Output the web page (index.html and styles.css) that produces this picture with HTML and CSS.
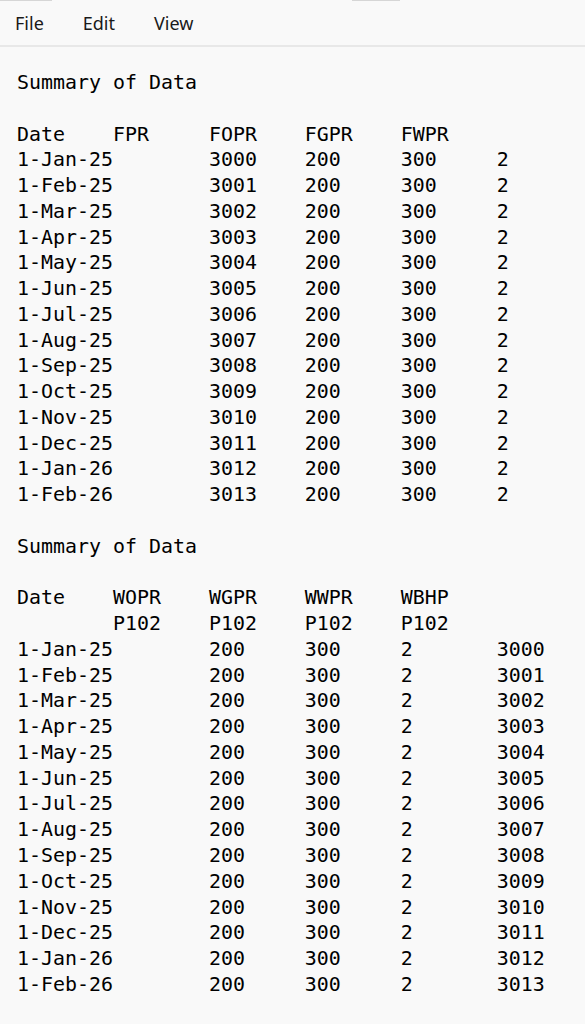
FILE: index.html
```html
<!DOCTYPE html>
<html>
<head>
<meta charset="utf-8">
<link rel="stylesheet" href="styles.css">
</head>
<body>
<div class="window">
  <div class="topline"><span class="seg seg-a"></span><span class="seg seg-b"></span></div>
  <nav class="menubar">
    <span class="menu-item">File</span>
    <span class="menu-item">Edit</span>
    <span class="menu-item">View</span>
  </nav>
  <pre class="editor">Summary of Data

Date	FPR	FOPR	FGPR	FWPR
1-Jan-25	3000	200	300	2
1-Feb-25	3001	200	300	2
1-Mar-25	3002	200	300	2
1-Apr-25	3003	200	300	2
1-May-25	3004	200	300	2
1-Jun-25	3005	200	300	2
1-Jul-25	3006	200	300	2
1-Aug-25	3007	200	300	2
1-Sep-25	3008	200	300	2
1-Oct-25	3009	200	300	2
1-Nov-25	3010	200	300	2
1-Dec-25	3011	200	300	2
1-Jan-26	3012	200	300	2
1-Feb-26	3013	200	300	2

Summary of Data

Date	WOPR	WGPR	WWPR	WBHP
	P102	P102	P102	P102
1-Jan-25	200	300	2	3000
1-Feb-25	200	300	2	3001
1-Mar-25	200	300	2	3002
1-Apr-25	200	300	2	3003
1-May-25	200	300	2	3004
1-Jun-25	200	300	2	3005
1-Jul-25	200	300	2	3006
1-Aug-25	200	300	2	3007
1-Sep-25	200	300	2	3008
1-Oct-25	200	300	2	3009
1-Nov-25	200	300	2	3010
1-Dec-25	200	300	2	3011
1-Jan-26	200	300	2	3012
1-Feb-26	200	300	2	3013</pre>
</div>
</body>
</html>
```

FILE: styles.css
```css
html, body {
  margin: 0;
  padding: 0;
  background: #f9f9f9;
}

.window {
  width: 585px;
  height: 1024px;
  background: #f9f9f9;
  overflow: hidden;
}

.topline {
  display: flex;
  height: 1px;
}

.seg {
  display: block;
  height: 1px;
  background: #d6d6d6;
}

.seg-a {
  width: 52px;
}

.seg-b {
  width: 48px;
  margin-left: 300px;
}

.menubar {
  display: flex;
  align-items: center;
  gap: 39px;
  height: 44px;
  padding-left: 15px;
  border-bottom: 2px solid #e8e8e8;
  font-family: "Noto Sans", "Open Sans", sans-serif;
  font-size: 18px;
  color: #1a1a1a;
}

.editor {
  margin: 0;
  padding: 23px 0 0 17px;
  font-family: "DejaVu Sans Mono", "Liberation Mono", monospace;
  font-size: 19.93px;
  line-height: 25.77px;
  tab-size: 8;
  -moz-tab-size: 8;
  color: #000;
}
```
